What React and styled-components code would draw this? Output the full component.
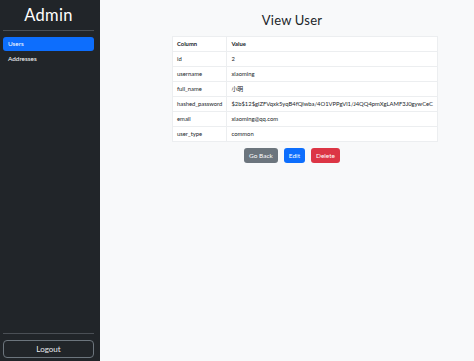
import styled, { createGlobalStyle } from "styled-components";

const GlobalStyle = createGlobalStyle`
  html, body {
    margin: 0;
    padding: 0;
    height: 100%;
  }
  body {
    font-family: Lato, "Noto Sans CJK SC", sans-serif;
    background: #f8f9fa;
    color: #212529;
  }
`;

const Layout = styled.div`
  display: flex;
  height: 100vh;
`;

const Sidebar = styled.aside`
  width: 100px;
  background: #212529;
  display: flex;
  flex-direction: column;
  padding: 0 6px 3px 3px;
  box-sizing: border-box;
`;

const Brand = styled.h1`
  margin: 4px 0 0;
  font-size: 16.5px;
  font-weight: 400;
  letter-spacing: 0.3px;
  color: #fff;
  text-align: center;
  line-height: 22px;
`;

const Rule = styled.hr`
  border: 0;
  border-top: 1px solid #4a4f55;
  margin: ${(props) => props.margin};
`;

const Nav = styled.nav`
  display: flex;
  flex-direction: column;
  gap: 1px;
  flex: 1;
`;

const NavItem = styled.a`
  display: block;
  padding: 2px 5px;
  font-size: 6.4px;
  line-height: 10px;
  border-radius: 3px;
  color: #fff;
  background: ${(props) => (props.active ? "#0d6efd" : "transparent")};
  text-decoration: none;
`;

const LogoutButton = styled.button`
  font-family: inherit;
  font-size: 8px;
  height: 18px;
  border: 1px solid #6c757d;
  border-radius: 4px;
  background: transparent;
  color: #e9ecef;
  padding: 0;
`;

const Main = styled.main`
  flex: 1;
  display: flex;
  flex-direction: column;
  align-items: center;
  padding: 10px 0 0 10px;
`;

const Title = styled.h2`
  margin: 0 0 6px;
  font-size: 13px;
  font-weight: 400;
  letter-spacing: 0.2px;
  line-height: 20px;
`;

const Table = styled.table`
  border-collapse: collapse;
  background: #fff;
  font-size: 5.85px;
  width: 266px;
  margin-left: 26px;
`;

const Cell = styled.td`
  border: 1px solid #eceef0;
  padding: 2px 4px;
  line-height: 10px;
  height: 10px;
  white-space: nowrap;
  font-weight: ${(props) => (props.head ? 700 : 400)};
  width: ${(props) => props.width || "auto"};
`;

const Actions = styled.div`
  display: flex;
  gap: 6px;
  margin-top: 6px;
`;

const Button = styled.button`
  font-family: inherit;
  font-size: 6.5px;
  height: 15px;
  padding: 0 5px;
  border: 0;
  border-radius: 3px;
  color: #fff;
  background: ${(props) => props.color};
`;

const rows = [
  ["id", "2"],
  ["username", "xiaoming"],
  ["full_name", "小明"],
  ["hashed_password", "$2b$12$glZFVqxk5yqB4fQlwba/4O1VPPgVl1/J4QQ4pmXgLAMF3J0gywCeC"],
  ["email", "xiaoming@qq.com"],
  ["user_type", "common"],
];

export default function App() {
  return (
    <Layout>
      <GlobalStyle />
      <Sidebar>
        <Brand>Admin</Brand>
        <Rule margin="4px 0 6px" />
        <Nav>
          <NavItem active href="#">Users</NavItem>
          <NavItem href="#">Addresses</NavItem>
        </Nav>
        <Rule margin="0 0 6px" />
        <LogoutButton>Logout</LogoutButton>
      </Sidebar>
      <Main>
        <Title>View User</Title>
        <Table>
          <tbody>
            <tr>
              <Cell head width="46px">Column</Cell>
              <Cell head>Value</Cell>
            </tr>
            {rows.map(([k, v]) => (
              <tr key={k}>
                <Cell>{k}</Cell>
                <Cell>{v}</Cell>
              </tr>
            ))}
          </tbody>
        </Table>
        <Actions>
          <Button color="#6c757d">Go Back</Button>
          <Button color="#0d6efd">Edit</Button>
          <Button color="#dc3545">Delete</Button>
        </Actions>
      </Main>
    </Layout>
  );
}
